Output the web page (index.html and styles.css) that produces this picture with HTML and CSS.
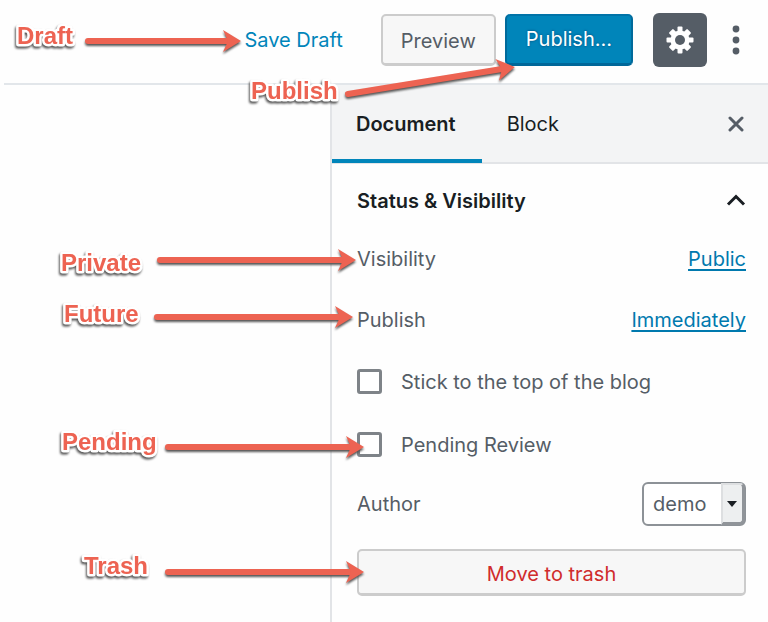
FILE: index.html
```html
<!DOCTYPE html>
<html lang="en">
<head>
<meta charset="utf-8">
<meta name="viewport" content="width=device-width, initial-scale=1">
<title>Post status settings</title>
<link rel="stylesheet" href="styles.css">
</head>
<body>
<div class="editor">
  <header class="toolbar">
    <button class="save-draft" type="button">Save Draft</button>
    <button class="button preview" type="button">Preview</button>
    <button class="button publish" type="button">Publish…</button>
    <button class="settings" type="button" aria-label="Settings">
      <svg width="28" height="28" viewBox="-14 -14 28 28" aria-hidden="true">
        <g fill="#fff">
          <rect x="-2.500" y="-13.500" width="5" height="27" rx="1"/>
          <rect x="-3" y="-13" width="6" height="26" rx="1" transform="rotate(45)"/>
          <rect x="-2.500" y="-13.500" width="5" height="27" rx="1" transform="rotate(90)"/>
          <rect x="-3" y="-13" width="6" height="26" rx="1" transform="rotate(135)"/>
          <circle r="9.600"/>
        </g>
        <circle r="5" fill="#555d66"/>
      </svg>
    </button>
    <button class="more" type="button" aria-label="More options">
      <svg width="8" height="30" viewBox="0 0 8 30" fill="#555d66" aria-hidden="true">
        <circle cx="4" cy="4" r="3.400"/><circle cx="4" cy="15" r="3.400"/><circle cx="4" cy="26" r="3.400"/>
      </svg>
    </button>
  </header>
  <div class="workspace">
    <main class="canvas"></main>
    <aside class="sidebar">
      <nav class="tabs">
        <button class="tab active" type="button">Document</button>
        <button class="tab" type="button">Block</button>
        <button class="close" type="button" aria-label="Close settings">
          <svg width="16" height="16" viewBox="0 0 16 16" aria-hidden="true"><path d="M2 2l12 12M14 2L2 14" stroke="#555d66" stroke-width="3" stroke-linecap="round"/></svg>
        </button>
      </nav>
      <section class="panel">
        <h2><button class="panel-title" type="button">Status &amp; Visibility
          <svg width="20" height="14" viewBox="0 0 20 14" aria-hidden="true"><path d="M2 10.500L10 2.500l8 8" fill="none" stroke="#191e23" stroke-width="3"/></svg>
        </button></h2>
        <div class="row"><span>Visibility</span><a href="#visibility">Public</a></div>
        <div class="row"><span>Publish</span><a href="#schedule">Immediately</a></div>
        <label class="check"><input type="checkbox">Stick to the top of the blog</label>
        <label class="check"><input type="checkbox">Pending Review</label>
        <div class="author">
          <label for="author">Author</label>
          <span class="picker">
            <select id="author"><option>demo</option></select>
            <span class="picker-arrow"></span>
          </span>
        </div>
        <button class="button trash" type="button">Move to trash</button>
      </section>
    </aside>
  </div>
  <svg class="notes" width="768" height="622" viewBox="0 0 768 622">
    <defs>
      <marker id="head" markerUnits="userSpaceOnUse" markerWidth="20" markerHeight="24" refX="8" refY="12" orient="auto">
        <path d="M0 1L18 12L0 23L5 12Z" fill="#ed6352"/>
      </marker>
    </defs>
    <g class="arrows">
      <path d="M88 41H231"/>
      <path d="M348 94L505 68.500"/>
      <path d="M160 260H346"/>
      <path d="M157 317H343"/>
      <path d="M168 447H354"/>
      <path d="M168 572H354"/>
    </g>
    <g class="captions">
      <text x="17" y="44">Draft</text>
      <text x="251" y="99">Publish</text>
      <text x="61" y="271">Private</text>
      <text x="64" y="322">Future</text>
      <text x="62" y="450">Pending</text>
      <text x="84" y="574">Trash</text>
    </g>
  </svg>
</div>
</body>
</html>
```
FILE: styles.css
```css
* { box-sizing: border-box; }

body {
  margin: 0;
  background: #fefefe;
  color: #555d66;
  font: 20px/28px Inter, "Liberation Sans", sans-serif;
}

button, select, input { margin: 0; font: inherit; color: inherit; }
button { padding: 0; border: 0; background: none; cursor: pointer; }
svg { display: block; }

.editor {
  position: relative;
  display: flex;
  flex-direction: column;
  min-height: 100vh;
  overflow: hidden;
}

.toolbar {
  display: flex;
  align-items: center;
  justify-content: flex-end;
  height: 85px;
  margin-left: 4px;
  padding: 0 28px 4px 0;
  border-bottom: 2px solid #e2e6ea;
}

.save-draft { margin-right: 38px; color: #0085ba; }

.button {
  height: 52px;
  padding: 4px 18px 0;
  border: 2px solid #cccccc;
  border-bottom-width: 3px;
  border-radius: 5px;
  background: #f7f7f7;
}

.preview { margin-right: 9px; }

.publish {
  padding: 0 19px;
  margin-right: 20px;
  border-color: #0073a8 #006a9b #006799;
  background: #0085ba;
  color: #fff;
  text-shadow: 0 -1px 2px #006799, 0 1px 2px #006799;
}

.settings {
  display: grid;
  place-items: center;
  width: 54px;
  height: 54px;
  margin-right: 25px;
  border-radius: 6px;
  background: #555d66;
}

.workspace { display: flex; flex: 1; }
.canvas { flex: 1; }

.sidebar {
  flex: 0 0 438px;
  border-left: 2px solid #e2e4e7;
}

.tabs {
  display: flex;
  height: 79px;
  border-bottom: 2px solid #e2e4e7;
  background: #f3f4f5;
  color: #191e23;
}

.tab { height: 78px; padding: 0 25px; }
.tab.active {
  padding: 4px 26px 0 24px;
  border-bottom: 4px solid #0085ba;
  font-weight: 600;
}

.close { margin-left: auto; padding: 0 24px; }

.panel { padding: 0 22px 26px 25px; }

h2 { margin: 0; font-size: 20px; }

.panel-title {
  display: flex;
  align-items: center;
  justify-content: space-between;
  width: 100%;
  height: 64px;
  padding-top: 9px;
  color: #191e23;
  font-weight: 600;
}

.row, .check {
  display: flex;
  align-items: center;
  height: 61px;
}

.row { justify-content: space-between; }

a {
  color: #0079ae;
  text-decoration: underline;
  text-decoration-thickness: 2px;
  text-underline-offset: 3px;
  text-decoration-skip-ink: none;
}

.check { height: 63px; gap: 19px; }

.check input {
  appearance: none;
  width: 25px;
  height: 25px;
  border: 3px solid #7e8388;
  border-radius: 3px;
  background: #fff;
}

.author {
  display: flex;
  align-items: center;
  justify-content: space-between;
  margin: 6px 0 23px;
}

.picker { position: relative; display: block; }

.picker select {
  appearance: none;
  display: block;
  height: 44px;
  padding: 0 37px 0 9px;
  border: 2px solid #8d9297;
  border-radius: 6px;
  background: #fff;
}

.picker-arrow {
  position: absolute;
  inset: 1px 1px 1px auto;
  width: 24px;
  border: 2px solid #dddfe1;
  border-right: 3px solid #909499;
  border-bottom: 3px solid #909499;
  border-radius: 0 5px 5px 0;
  background: #edeff0;
  pointer-events: none;
}

.picker-arrow::after {
  content: "";
  position: absolute;
  top: 16px;
  left: 4px;
  border: 5px solid transparent;
  border-top: 6px solid #191e23;
  border-bottom: 0;
}

.trash { width: 100%; height: 47px; color: #d02c2c; }

.notes {
  position: absolute;
  top: 0;
  right: 0;
  pointer-events: none;
}

.arrows path {
  fill: none;
  stroke: #ed6352;
  stroke-width: 6px;
  stroke-linecap: round;
  marker-end: url(#head);
}

.arrows { filter: drop-shadow(0 2px 1px #555); }

.captions {
  fill: #ed6352;
  stroke: #fff;
  stroke-width: 5px;
  stroke-linejoin: round;
  paint-order: stroke;
  font: bold 24px "Liberation Sans", Arial, sans-serif;
  filter: drop-shadow(-1px 2px 1px #555);
}
```
